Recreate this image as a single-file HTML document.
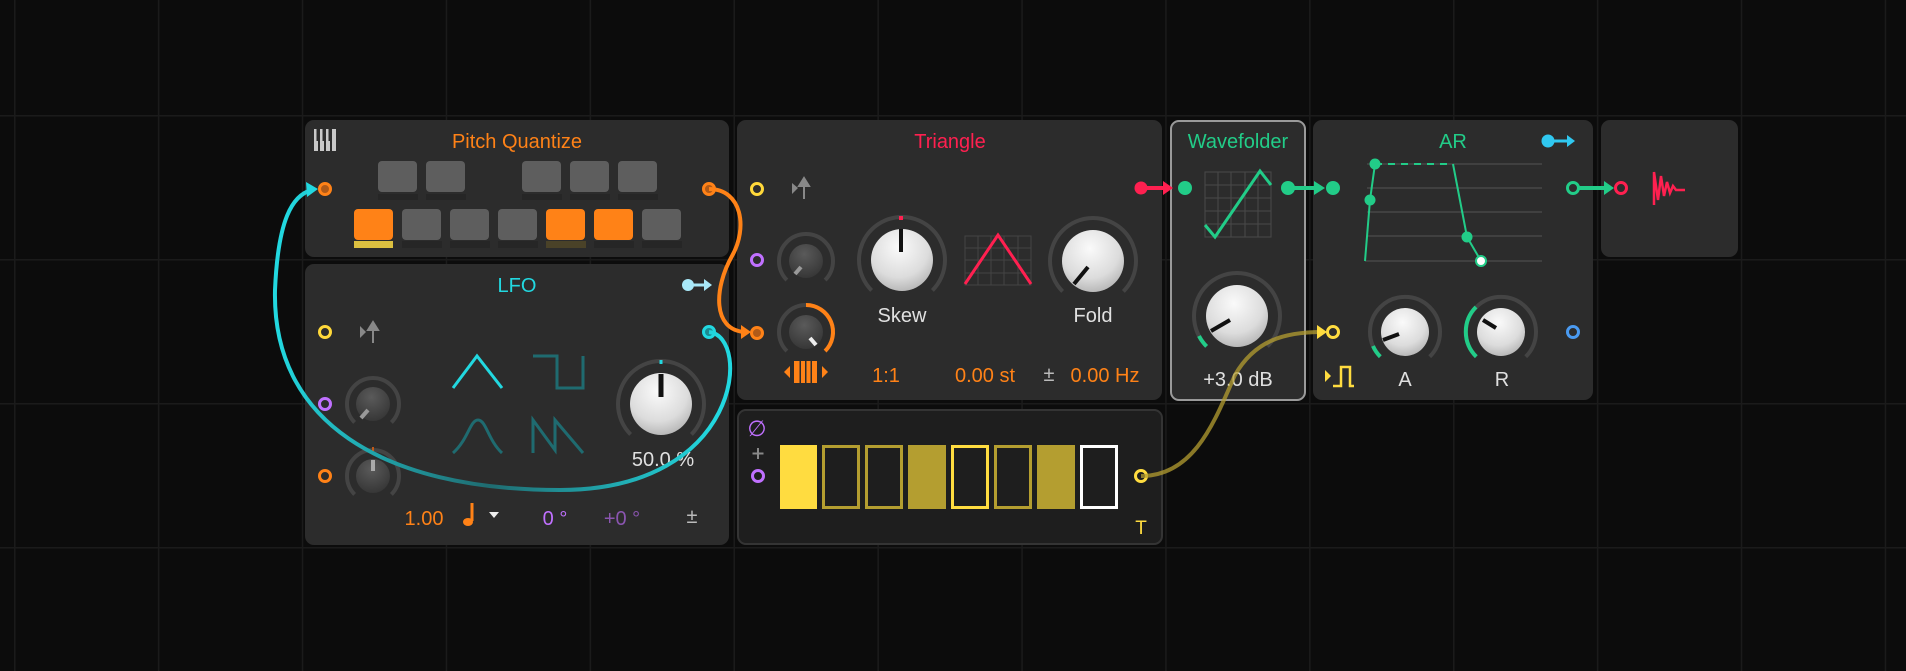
<!DOCTYPE html>
<html><head><meta charset="utf-8"><style>
html,body{margin:0;padding:0;background:#0c0c0c;width:1906px;height:671px;overflow:hidden}
svg text{font-family:"Liberation Sans",sans-serif}
</style></head><body>
<svg width="1906" height="671" viewBox="0 0 1906 671" xmlns="http://www.w3.org/2000/svg">
<defs>
<pattern id="grid" x="14" y="115" width="143.9" height="144" patternUnits="userSpaceOnUse">
<path d="M0,0 V144 M0,0 H143.9" stroke="#1b1b1b" stroke-width="3" fill="none"/>
</pattern>
<radialGradient id="kw" cx="0.45" cy="0.3" r="0.8"><stop offset="0" stop-color="#fafafa"/><stop offset="0.6" stop-color="#dcdcdc"/><stop offset="1" stop-color="#a9a9a9"/></radialGradient>
<radialGradient id="kd" cx="0.45" cy="0.3" r="0.8"><stop offset="0" stop-color="#5a5a5a"/><stop offset="1" stop-color="#323232"/></radialGradient>
<linearGradient id="cy" gradientUnits="userSpaceOnUse" x1="280" y1="300" x2="720" y2="330">
<stop offset="0" stop-color="#22d8e0"/><stop offset="0.5" stop-color="#1f6b70"/><stop offset="1" stop-color="#22d8e0"/></linearGradient>
</defs>
<rect width="1906" height="671" fill="#0c0c0c"/>
<rect width="1906" height="671" fill="url(#grid)"/>

<!-- panels -->
<rect x="305" y="120" width="424" height="137" rx="9" fill="#2c2c2c"/>
<rect x="305" y="264" width="424" height="281" rx="9" fill="#2c2c2c"/>
<rect x="737" y="120" width="425" height="280" rx="9" fill="#2c2c2c"/>
<rect x="738" y="410" width="424" height="134" rx="8" fill="#1e1e1e" stroke="#343434" stroke-width="2"/>
<rect x="1171" y="121" width="134" height="279" rx="8" fill="#2c2c2c" stroke="#9a9a9a" stroke-width="2"/>
<rect x="1313" y="120" width="280" height="280" rx="9" fill="#2c2c2c"/>
<rect x="1601" y="120" width="137" height="137" rx="9" fill="#2c2c2c"/>

<!-- Pitch Quantize -->
<g fill="#c8c8c8"><rect x="314" y="129" width="22" height="22"/></g>
<g fill="#2c2c2c"><rect x="318" y="129" width="2" height="22"/><rect x="324" y="129" width="2" height="22"/><rect x="330" y="129" width="2" height="22"/></g>
<g fill="#2c2c2c"><rect x="316.5" y="129" width="3" height="12"/><rect x="322.5" y="129" width="3" height="12"/><rect x="328.5" y="129" width="3" height="12"/></g>
<text x="517" y="148" font-size="20" fill="#ff8217" text-anchor="middle">Pitch Quantize</text>
<g fill="#5e5e5e">
<rect x="378" y="161" width="39" height="31" rx="4"/><rect x="426" y="161" width="39" height="31" rx="4"/>
<rect x="522" y="161" width="39" height="31" rx="4"/><rect x="570" y="161" width="39" height="31" rx="4"/><rect x="618" y="161" width="39" height="31" rx="4"/>
<rect x="402" y="209" width="39" height="31" rx="4"/><rect x="450" y="209" width="39" height="31" rx="4"/><rect x="498" y="209" width="39" height="31" rx="4"/><rect x="642" y="209" width="39" height="31" rx="4"/>
</g>
<g fill="#ff8217"><rect x="354" y="209" width="39" height="31" rx="4"/><rect x="546" y="209" width="39" height="31" rx="4"/><rect x="594" y="209" width="39" height="31" rx="4"/></g>
<g fill="#262626">
<rect x="378" y="194" width="40" height="6"/><rect x="426" y="194" width="40" height="6"/><rect x="522" y="194" width="40" height="6"/><rect x="570" y="194" width="40" height="6"/><rect x="618" y="194" width="40" height="6"/>
<rect x="402" y="241" width="40" height="7"/><rect x="450" y="241" width="40" height="7"/><rect x="498" y="241" width="40" height="7"/><rect x="594" y="241" width="40" height="7"/><rect x="642" y="241" width="40" height="7"/>
</g>
<rect x="354" y="241" width="39" height="7" fill="#dcc040"/>
<rect x="546" y="241" width="40" height="7" fill="#4a4228"/>
<circle cx="325" cy="189" r="5.5" fill="#b05a18" stroke="#ff8217" stroke-width="3"/>
<circle cx="709" cy="189" r="5.5" fill="#b05a18" stroke="#ff8217" stroke-width="3"/>

<!-- LFO -->
<text x="517" y="292" font-size="20" fill="#22d8e0" text-anchor="middle">LFO</text>
<circle cx="688" cy="285" r="6" fill="#a8e8f8"/><path d="M688,285 H707" stroke="#a8e8f8" stroke-width="3"/><path d="M704,279 L712,285 L704,291Z" fill="#a8e8f8"/>
<circle cx="325" cy="332" r="5.5" fill="none" stroke="#ffd83a" stroke-width="3"/>
<circle cx="325" cy="404" r="5.5" fill="none" stroke="#c070ff" stroke-width="3"/>
<circle cx="325" cy="476" r="5.5" fill="none" stroke="#ff8217" stroke-width="3"/>
<path d="M360,326 L366,332 L360,338Z" fill="#888"/><path d="M373,343 V324 M368,330 L373,322 L378,330Z" stroke="#888" stroke-width="2" fill="#888"/>
<path d="M354.6,422.4 A26,26 0 1 1 391.4,422.4" fill="none" stroke="#444" stroke-width="4"/>
<circle cx="373" cy="404" r="17" fill="url(#kd)"/><path d="M368,410 L361,418" stroke="#999" stroke-width="4"/>
<path d="M354.6,494.4 A26,26 0 1 1 391.4,494.4" fill="none" stroke="#444" stroke-width="4"/>
<circle cx="373" cy="476" r="17" fill="url(#kd)"/><path d="M373,460 V471" stroke="#aaa" stroke-width="4"/><rect x="372" y="447" width="2" height="4" fill="#c05a18"/>
<path d="M453,388 L477,356 L502,388" fill="none" stroke="#22d8e0" stroke-width="3"/>
<path d="M533,356 H557 V388 H583 V356" fill="none" stroke="#1f6b70" stroke-width="3"/>
<path d="M453,453 C468,440 470,420 478,420 C486,420 488,440 502,453" fill="none" stroke="#1f6b70" stroke-width="3"/>
<path d="M533,453 V420 L555,450 V420 L583,453" fill="none" stroke="#1f6b70" stroke-width="3"/>
<path d="M630.6,434.4 A43,43 0 1 1 691.4,434.4" fill="none" stroke="#444" stroke-width="4"/>
<rect x="659.5" y="360" width="3" height="4" fill="#22d8e0"/>
<circle cx="661" cy="404" r="31" fill="url(#kw)"/><path d="M661,374 V397" stroke="#111" stroke-width="5"/>
<text x="663" y="466" font-size="20" fill="#e0e0e0" text-anchor="middle">50.0 %</text>
<text x="424" y="525" font-size="20" fill="#ff8217" text-anchor="middle">1.00</text>
<path d="M472,503 V521" stroke="#ff8217" stroke-width="3"/><ellipse cx="468" cy="522" rx="5" ry="4" fill="#ff8217"/>
<path d="M489,512 L499,512 L494,518Z" fill="#eee"/>
<text x="555" y="525" font-size="20" fill="#c070ff" text-anchor="middle">0 °</text>
<text x="622" y="525" font-size="20" fill="#8a55b0" text-anchor="middle">+0 °</text>
<text x="692" y="523" font-size="20" fill="#bbb" text-anchor="middle">±</text>
<circle cx="709" cy="332" r="5.5" fill="#1b8a90" stroke="#22d8e0" stroke-width="3"/>

<!-- Triangle -->
<text x="950" y="148" font-size="20" fill="#ff2050" text-anchor="middle">Triangle</text>
<circle cx="757" cy="189" r="5.5" fill="none" stroke="#ffd83a" stroke-width="3"/>
<circle cx="757" cy="260" r="5.5" fill="none" stroke="#c070ff" stroke-width="3"/>
<circle cx="757" cy="333" r="5.5" fill="#b05a18" stroke="#ff8217" stroke-width="3"/>
<path d="M792,183 L798,188 L792,194Z" fill="#888"/><path d="M804,199 V180 M799,186 L804,178 L809,186Z" stroke="#888" stroke-width="2" fill="#888"/>
<path d="M786.9,280.1 A27,27 0 1 1 825.1,280.1" fill="none" stroke="#444" stroke-width="4"/>
<circle cx="806" cy="261" r="17" fill="url(#kd)"/><path d="M801,267 L795,274" stroke="#999" stroke-width="4"/>
<path d="M786.9,351.1 A27,27 0 1 1 825.1,351.1" fill="none" stroke="#444" stroke-width="4"/>
<path d="M806,305 A27,27 0 0 1 825.1,351.1" fill="none" stroke="#ff8217" stroke-width="4"/>
<circle cx="806" cy="332" r="17" fill="url(#kd)"/><path d="M810,338 L816,345" stroke="#eee" stroke-width="4"/>
<g fill="#ff8217"><path d="M784,372 L790,366 V378Z"/><path d="M828,372 L822,366 V378Z"/><rect x="794" y="361" width="23" height="22"/></g>
<g fill="#2c2c2c"><rect x="799.5" y="361" width="1.5" height="22"/><rect x="805" y="361" width="1.5" height="22"/><rect x="810.5" y="361" width="1.5" height="22"/></g>
<path d="M871.6,290.4 A43,43 0 1 1 932.4,290.4" fill="none" stroke="#444" stroke-width="4"/>
<rect x="899" y="216" width="4" height="4" fill="#ff2050"/>
<circle cx="902" cy="260" r="31" fill="url(#kw)"/><path d="M901,229 V252" stroke="#111" stroke-width="4"/>
<g stroke="#444" stroke-width="1" fill="none"><rect x="965" y="236" width="66" height="49"/><path d="M965,248 H1031 M965,260 H1031 M965,273 H1031 M978,236 V285 M991,236 V285 M1004,236 V285 M1018,236 V285"/></g>
<path d="M965,284 L998,235 L1031,284" fill="none" stroke="#ff2050" stroke-width="3"/>
<path d="M1062.6,291.4 A43,43 0 1 1 1123.4,291.4" fill="none" stroke="#444" stroke-width="4"/>
<circle cx="1093" cy="261" r="31" fill="url(#kw)"/><path d="M1088,267 L1074,284" stroke="#111" stroke-width="4"/>
<text x="902" y="322" font-size="20" fill="#e0e0e0" text-anchor="middle">Skew</text>
<text x="1093" y="322" font-size="20" fill="#e0e0e0" text-anchor="middle">Fold</text>
<text x="886" y="382" font-size="20" fill="#ff8217" text-anchor="middle">1:1</text>
<text x="985" y="382" font-size="20" fill="#ff8217" text-anchor="middle">0.00 st</text>
<text x="1049" y="381" font-size="20" fill="#bbb" text-anchor="middle">±</text>
<text x="1105" y="382" font-size="20" fill="#ff8217" text-anchor="middle">0.00 Hz</text>
<circle cx="1141" cy="188" r="6.5" fill="#ff2050"/><path d="M1141,188 H1166" stroke="#ff2050" stroke-width="4"/><path d="M1163,181 L1173,188 L1163,195Z" fill="#ff2050"/>

<!-- Wavefolder -->
<text x="1238" y="148" font-size="20" fill="#22cc88" text-anchor="middle">Wavefolder</text>
<circle cx="1185" cy="188" r="7" fill="#22cc88"/>
<g stroke="#4a4a4a" stroke-width="1" fill="none"><rect x="1205" y="172" width="66" height="65"/><path d="M1205,185 H1271 M1205,198 H1271 M1205,211 H1271 M1205,224 H1271 M1218,172 V237 M1231,172 V237 M1245,172 V237 M1258,172 V237"/></g>
<path d="M1205,225 L1215,237 L1260,171 L1271,185" fill="none" stroke="#22cc88" stroke-width="3"/>
<circle cx="1288" cy="188" r="7" fill="#22cc88"/><path d="M1288,188 H1318" stroke="#22cc88" stroke-width="4"/><path d="M1314,181 L1325,188 L1314,195Z" fill="#22cc88"/>
<path d="M1206.6,346.4 A43,43 0 1 1 1267.4,346.4" fill="none" stroke="#444" stroke-width="4"/>
<path d="M1206.6,346.4 A43,43 0 0 1 1199,336" fill="none" stroke="#22cc88" stroke-width="4"/>
<circle cx="1237" cy="316" r="31" fill="url(#kw)"/><path d="M1230,320 L1211,331" stroke="#111" stroke-width="4"/>
<text x="1238" y="386" font-size="20" fill="#e0e0e0" text-anchor="middle">+3.0 dB</text>

<!-- Sequencer -->
<text x="757" y="436" font-size="22" fill="#c070ff" text-anchor="middle">∅</text>
<path d="M758,448 V459 M752.5,453.5 H763.5" stroke="#888" stroke-width="2"/>
<circle cx="758" cy="476" r="5.5" fill="none" stroke="#c070ff" stroke-width="3"/>
<rect x="780" y="445" width="37" height="64" fill="#ffdc40"/>
<rect x="823.5" y="446.5" width="35" height="61" fill="none" stroke="#b49e30" stroke-width="3"/>
<rect x="866.5" y="446.5" width="35" height="61" fill="none" stroke="#b49e30" stroke-width="3"/>
<rect x="908" y="445" width="38" height="64" fill="#b49e30"/>
<rect x="952.5" y="446.5" width="35" height="61" fill="none" stroke="#ffdc40" stroke-width="3"/>
<rect x="995.5" y="446.5" width="35" height="61" fill="none" stroke="#b49e30" stroke-width="3"/>
<rect x="1037" y="445" width="38" height="64" fill="#b49e30"/>
<rect x="1081.5" y="446.5" width="35" height="61" fill="none" stroke="#fff" stroke-width="3"/>
<circle cx="1141" cy="476" r="5.5" fill="none" stroke="#ffdc40" stroke-width="3"/>
<text x="1141" y="534" font-size="19" fill="#ffdc40" text-anchor="middle">T</text>

<!-- AR -->
<text x="1453" y="148" font-size="20" fill="#22cc88" text-anchor="middle">AR</text>
<circle cx="1548" cy="141" r="6.5" fill="#30c8f0"/><path d="M1548,141 H1570" stroke="#30c8f0" stroke-width="3"/><path d="M1567,135 L1575,141 L1567,147Z" fill="#30c8f0"/>
<circle cx="1333" cy="188" r="7" fill="#22cc88"/>
<g stroke="#555" stroke-width="1"><path d="M1367,164 H1542 M1367,188 H1542 M1367,212 H1542 M1367,236 H1542 M1365,261 H1542"/></g>
<path d="M1365,261 L1370,200 L1375,164" fill="none" stroke="#22cc88" stroke-width="2"/>
<path d="M1375,164 H1453" fill="none" stroke="#22cc88" stroke-width="2" stroke-dasharray="7,6"/>
<path d="M1453,164 L1467,237 L1481,261" fill="none" stroke="#22cc88" stroke-width="2"/>
<circle cx="1375" cy="164" r="5.5" fill="#22cc88"/><circle cx="1370" cy="200" r="5.5" fill="#22cc88"/><circle cx="1467" cy="237" r="5.5" fill="#22cc88"/>
<circle cx="1481" cy="261" r="5" fill="#fff" stroke="#22cc88" stroke-width="2"/>
<circle cx="1573" cy="188" r="5.5" fill="none" stroke="#22cc88" stroke-width="3"/><path d="M1579,188 H1608" stroke="#22cc88" stroke-width="4"/><path d="M1604,181 L1614,188 L1604,195Z" fill="#22cc88"/>
<circle cx="1621" cy="188" r="5.5" fill="none" stroke="#ff2050" stroke-width="3"/>
<path d="M1654,205 V172 L1658,200 L1661,176 L1664,196 L1667,182 L1670,193 L1673,186 L1676,190 H1685" fill="none" stroke="#ff2050" stroke-width="2.5"/>
<circle cx="1333" cy="332" r="5.5" fill="none" stroke="#ffdc40" stroke-width="3"/>
<path d="M1380.3,356.7 A35,35 0 1 1 1429.7,356.7" fill="none" stroke="#444" stroke-width="4"/>
<path d="M1380.3,356.7 A35,35 0 0 1 1373,346" fill="none" stroke="#22cc88" stroke-width="4"/>
<circle cx="1405" cy="332" r="24" fill="url(#kw)"/><path d="M1399,334 L1383,340" stroke="#111" stroke-width="4"/>
<path d="M1476.3,356.7 A35,35 0 1 1 1525.7,356.7" fill="none" stroke="#444" stroke-width="4"/>
<path d="M1476.3,356.7 A35,35 0 0 1 1476,307" fill="none" stroke="#22cc88" stroke-width="4"/>
<circle cx="1501" cy="332" r="24" fill="url(#kw)"/><path d="M1496,328 L1483,320" stroke="#111" stroke-width="4"/>
<text x="1405" y="386" font-size="20" fill="#e0e0e0" text-anchor="middle">A</text>
<text x="1502" y="386" font-size="20" fill="#e0e0e0" text-anchor="middle">R</text>
<circle cx="1573" cy="332" r="5.5" fill="none" stroke="#4a9af0" stroke-width="3"/>
<path d="M1325,370 L1331,376 L1325,382Z" fill="#ffdc40"/>
<path d="M1333,386 H1341 V367 H1350 V386 H1354" fill="none" stroke="#ffdc40" stroke-width="2.5"/>

<!-- cables -->
<path d="M709,189 C742,189 748,228 732,256 C714,288 712,330 745,332" fill="none" stroke="#ff8217" stroke-width="4"/>
<path d="M741,325 L751,332 L741,339Z" fill="#ff8217"/>
<path d="M709,332 C752,336 742,490 560,490 C380,490 272,420 275,290 C278,220 292,195 312,190" fill="none" stroke="url(#cy)" stroke-width="4"/>
<path d="M306,182 L318,189 L307,197Z" fill="#22d8e0"/>
<path d="M1141,476 C1195,476 1215,420 1235,375 C1255,340 1285,332 1322,332" fill="none" stroke="#b49e30" stroke-opacity="0.75" stroke-width="4"/>
<path d="M1317,325 L1327,332 L1317,339Z" fill="#ffdc40"/>
</svg>
</body></html>
